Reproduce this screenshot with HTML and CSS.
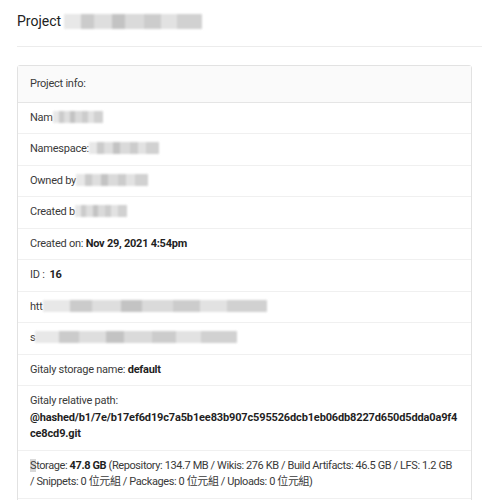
FILE: index.html
```html
<!DOCTYPE html>
<html lang="zh-Hant">
<head>
    <meta charset="UTF-8">
    <meta name="viewport" content="width=device-width, initial-scale=1.0">
    <title>Project</title>
    <link rel="stylesheet" href="styles.css">
</head>
<body>
    <div class="page">
        <h3 class="page-title">Project<span class="redact w138 tall"></span></h3>
        <hr>

        <div class="card">
            <div class="card-header">Project info:</div>
            <ul class="info-list">
                <li>Nam<span class="redact w50"></span></li>
                <li>Namespace:<span class="redact w70"></span></li>
                <li>Owned by<span class="redact w72"></span></li>
                <li>Created b<span class="redact w52"></span></li>
                <li>Created on: <strong>Nov 29, 2021 4:54pm</strong></li>
                <li>ID :&nbsp;&nbsp;<strong>16</strong></li>
                <li>htt<span class="redact w224"></span></li>
                <li>s<span class="redact w202"></span></li>
                <li>Gitaly storage name: <strong>default</strong></li>
                <li>
                    Gitaly relative path:<br>
                    <strong class="path">@hashed/b1/7e/b17ef6d19c7a5b1ee83b907c595526dcb1eb06db8227d650d5dda0a9f4ce8cd9.git</strong>
                </li>
                <li class="storage"><span class="mark">S</span>torage: <strong>47.8 GB</strong> (Repository: 134.7 MB / Wikis: 276 KB / Build Artifacts: 46.5 GB / LFS: 1.2 GB /&nbsp;Snippets: 0 位元組 / Packages: 0 位元組 / Uploads: 0 位元組)</li>
                <li>&nbsp;</li>
            </ul>
        </div>
    </div>
</body>
</html>
```

FILE: styles.css
```css
body {
    margin: 0;
    font-family: Roboto, "Noto Sans CJK TC", sans-serif;
    font-size: 11px;
    letter-spacing: -0.25px;
    color: #3a3a3a;
    background: #fff;
    overflow: hidden;
}
.page {
    padding: 0 0 0 17px;
}
.page-title {
    margin: 0;
    padding-top: 10px;
    height: 26px;
    font-size: 14px;
    font-weight: normal;
    letter-spacing: 0;
    color: #222;
    line-height: 22px;
}
hr {
    margin: 10px 0 18px 0;
    border: none;
    border-top: 1px solid #ececec;
}
.card {
    margin-right: 10px;
    border: 1px solid #e2e2e2;
    border-radius: 3px;
}
.card-header {
    background: #fafafa;
    padding: 9.5px 12px;
    line-height: 16.5px;
    border-bottom: 1px solid #e5e5e5;
}
.info-list {
    list-style: none;
    margin: 0;
    padding: 0;
}
.info-list li {
    padding: 7px 12px;
    line-height: 16.5px;
    border-bottom: 1px solid #f0f0f0;
}
.info-list strong {
    color: #1f1f1f;
    font-weight: bold;
}
.info-list .storage {
    letter-spacing: -0.4px;
}
.path {
    word-break: break-all;
    letter-spacing: -0.15px;
}
.mark {
    background: #d8d8d8;
}
.redact {
    display: inline-block;
    height: 12px;
    vertical-align: -2px;
    background:
        linear-gradient(90deg, #e4e4e4 0 12%, #c2c2c2 12% 22%, #d9d9d9 22% 35%, #b9b9b9 35% 44%, #d4d4d4 44% 58%, #c4c4c4 58% 70%, #dedede 70% 82%, #c9c9c9 82% 100%);
    opacity: 0.85;
    filter: blur(1px);
}
.redact.tall { height: 15px; vertical-align: -3px; margin-left: 3px; }
.w50 { width: 50px; }
.w52 { width: 52px; }
.w70 { width: 70px; }
.w72 { width: 72px; }
.w138 { width: 138px; }
.w202 { width: 202px; }
.w224 { width: 224px; }
```
